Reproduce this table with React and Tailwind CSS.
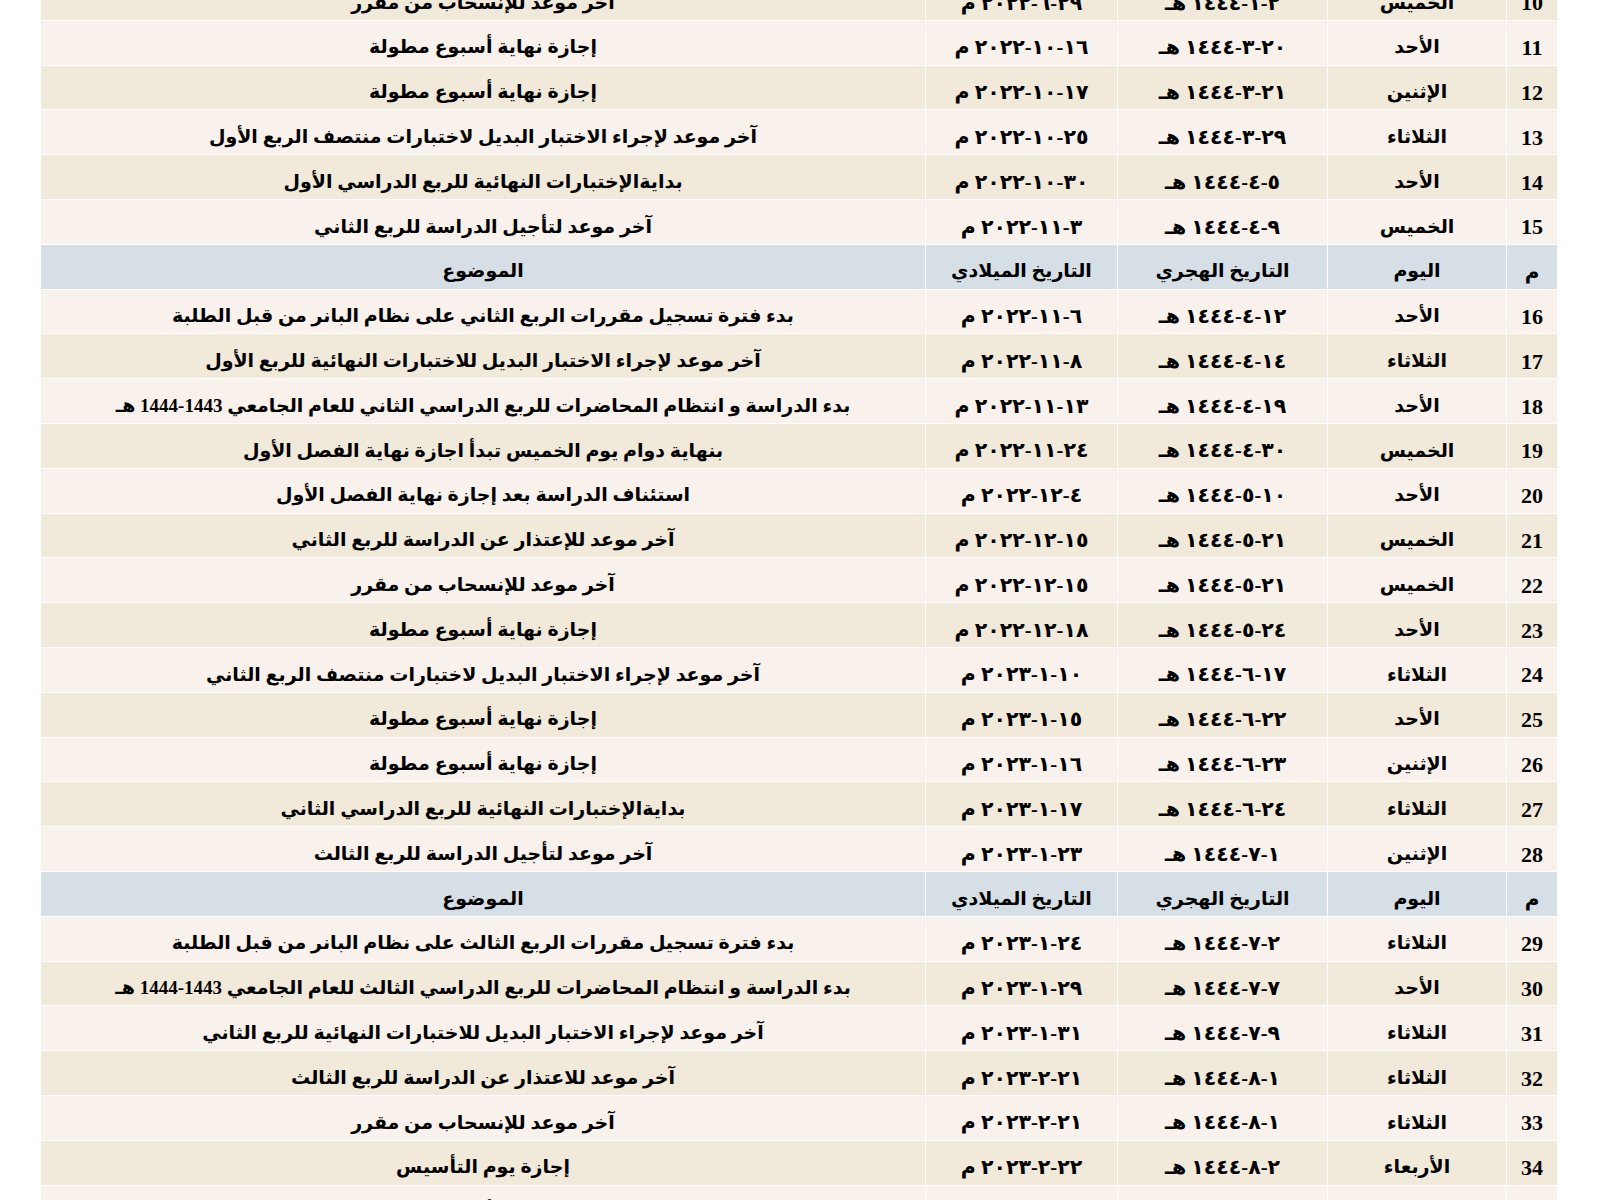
import React from 'react';

const rows = [
  { n: 10, day: 'الخميس', hijri: '٢-١-١٤٤٤ هـ', greg: '٢٩-٦-٢٠٢٢ م', topic: 'آخر موعد للإنسحاب من مقرر' },
  { n: 11, day: 'الأحد', hijri: '٢٠-٣-١٤٤٤ هـ', greg: '١٦-١٠-٢٠٢٢ م', topic: 'إجازة نهاية أسبوع مطولة' },
  { n: 12, day: 'الإثنين', hijri: '٢١-٣-١٤٤٤ هـ', greg: '١٧-١٠-٢٠٢٢ م', topic: 'إجازة نهاية أسبوع مطولة' },
  { n: 13, day: 'الثلاثاء', hijri: '٢٩-٣-١٤٤٤ هـ', greg: '٢٥-١٠-٢٠٢٢ م', topic: 'آخر موعد لإجراء الاختبار البديل لاختبارات منتصف الربع الأول' },
  { n: 14, day: 'الأحد', hijri: '٥-٤-١٤٤٤ هـ', greg: '٣٠-١٠-٢٠٢٢ م', topic: 'بدايةالإختبارات النهائية للربع الدراسي الأول' },
  { n: 15, day: 'الخميس', hijri: '٩-٤-١٤٤٤ هـ', greg: '٣-١١-٢٠٢٢ م', topic: 'آخر موعد لتأجيل الدراسة للربع الثاني' },
  { header: true },
  { n: 16, day: 'الأحد', hijri: '١٢-٤-١٤٤٤ هـ', greg: '٦-١١-٢٠٢٢ م', topic: 'بدء فترة تسجيل مقررات الربع الثاني على نظام البانر من قبل الطلبة' },
  { n: 17, day: 'الثلاثاء', hijri: '١٤-٤-١٤٤٤ هـ', greg: '٨-١١-٢٠٢٢ م', topic: 'آخر موعد لإجراء الاختبار البديل للاختبارات النهائية للربع الأول' },
  { n: 18, day: 'الأحد', hijri: '١٩-٤-١٤٤٤ هـ', greg: '١٣-١١-٢٠٢٢ م', topic: 'بدء الدراسة و انتظام المحاضرات للربع الدراسي الثاني للعام الجامعي 1443-1444 هـ' },
  { n: 19, day: 'الخميس', hijri: '٣٠-٤-١٤٤٤ هـ', greg: '٢٤-١١-٢٠٢٢ م', topic: 'بنهاية دوام يوم الخميس تبدأ اجازة نهاية الفصل الأول' },
  { n: 20, day: 'الأحد', hijri: '١٠-٥-١٤٤٤ هـ', greg: '٤-١٢-٢٠٢٢ م', topic: 'استئناف الدراسة بعد إجازة نهاية الفصل الأول' },
  { n: 21, day: 'الخميس', hijri: '٢١-٥-١٤٤٤ هـ', greg: '١٥-١٢-٢٠٢٢ م', topic: 'آخر موعد للإعتذار عن الدراسة للربع الثاني' },
  { n: 22, day: 'الخميس', hijri: '٢١-٥-١٤٤٤ هـ', greg: '١٥-١٢-٢٠٢٢ م', topic: 'آخر موعد للإنسحاب من مقرر' },
  { n: 23, day: 'الأحد', hijri: '٢٤-٥-١٤٤٤ هـ', greg: '١٨-١٢-٢٠٢٢ م', topic: 'إجازة نهاية أسبوع مطولة' },
  { n: 24, day: 'الثلاثاء', hijri: '١٧-٦-١٤٤٤ هـ', greg: '١٠-١-٢٠٢٣ م', topic: 'آخر موعد لإجراء الاختبار البديل لاختبارات منتصف الربع الثاني' },
  { n: 25, day: 'الأحد', hijri: '٢٢-٦-١٤٤٤ هـ', greg: '١٥-١-٢٠٢٣ م', topic: 'إجازة نهاية أسبوع مطولة' },
  { n: 26, day: 'الإثنين', hijri: '٢٣-٦-١٤٤٤ هـ', greg: '١٦-١-٢٠٢٣ م', topic: 'إجازة نهاية أسبوع مطولة' },
  { n: 27, day: 'الثلاثاء', hijri: '٢٤-٦-١٤٤٤ هـ', greg: '١٧-١-٢٠٢٣ م', topic: 'بدايةالإختبارات النهائية للربع الدراسي الثاني' },
  { n: 28, day: 'الإثنين', hijri: '١-٧-١٤٤٤ هـ', greg: '٢٣-١-٢٠٢٣ م', topic: 'آخر موعد لتأجيل الدراسة للربع الثالث' },
  { header: true },
  { n: 29, day: 'الثلاثاء', hijri: '٢-٧-١٤٤٤ هـ', greg: '٢٤-١-٢٠٢٣ م', topic: 'بدء فترة تسجيل مقررات الربع الثالث على نظام البانر من قبل الطلبة' },
  { n: 30, day: 'الأحد', hijri: '٧-٧-١٤٤٤ هـ', greg: '٢٩-١-٢٠٢٣ م', topic: 'بدء الدراسة و انتظام المحاضرات للربع الدراسي الثالث للعام الجامعي 1443-1444 هـ' },
  { n: 31, day: 'الثلاثاء', hijri: '٩-٧-١٤٤٤ هـ', greg: '٣١-١-٢٠٢٣ م', topic: 'آخر موعد لإجراء الاختبار البديل للاختبارات النهائية للربع الثاني' },
  { n: 32, day: 'الثلاثاء', hijri: '١-٨-١٤٤٤ هـ', greg: '٢١-٢-٢٠٢٣ م', topic: 'آخر موعد للاعتذار عن الدراسة للربع الثالث' },
  { n: 33, day: 'الثلاثاء', hijri: '١-٨-١٤٤٤ هـ', greg: '٢١-٢-٢٠٢٣ م', topic: 'آخر موعد للإنسحاب من مقرر' },
  { n: 34, day: 'الأربعاء', hijri: '٢-٨-١٤٤٤ هـ', greg: '٢٢-٢-٢٠٢٣ م', topic: 'إجازة يوم التأسيس' },
  { n: 35, day: 'الخميس', hijri: '٣-٨-١٤٤٤ هـ', greg: '٢٣-٢-٢٠٢٣ م', topic: 'إجازة نهاية أسبوع مطولة' },
];

// text sits a little low in the cells, like the printed sheet
const cell = 'h-[43.8px] p-0 pt-[10px] text-center align-middle';

const HeaderRow = () => (
  <tr className="bg-[#d6dfe6]">
    <td className={`${cell} text-[20px]`}>م</td>
    <td className={cell}>اليوم</td>
    <td className={cell}>التاريخ الهجري</td>
    <td className={cell}>التاريخ الميلادي</td>
    <td className={cell}>الموضوع</td>
  </tr>
);

export default function App() {
  // stripes restart after every header row
  let idx = 0;
  return (
    <div className="h-[1200px] overflow-hidden bg-white">
      <table
        dir="rtl"
        className="ml-[40px] -mt-[25px] w-[1518px] table-fixed border-separate border-spacing-[1px] text-[19px] font-bold text-black font-['Liberation_Serif','DejaVu_Sans',serif]"
      >
        <colgroup>
          <col className="w-[50px]" />
          <col className="w-[178px]" />
          <col className="w-[209px]" />
          <col className="w-[191px]" />
          <col />
        </colgroup>
        <tbody>
          {rows.map((r, i) => {
            if (r.header) {
              idx = 0;
              return <HeaderRow key={i} />;
            }
            const odd = r.n <= 15 ? r.n % 2 === 1 : idx % 2 === 0;
            idx += 1;
            const bg = odd ? 'bg-[#f9f1eb]' : 'bg-[#f1e9da]';
            return (
              <tr key={i} className={bg}>
                <td className={`${cell} text-[22px]`}>{r.n}</td>
                <td className={cell}>{r.day}</td>
                <td className={`${cell} text-[20.5px]`}>{r.hijri}</td>
                <td className={`${cell} text-[20.5px]`}>{r.greg}</td>
                <td className={cell}>{r.topic}</td>
              </tr>
            );
          })}
        </tbody>
      </table>
    </div>
  );
}
